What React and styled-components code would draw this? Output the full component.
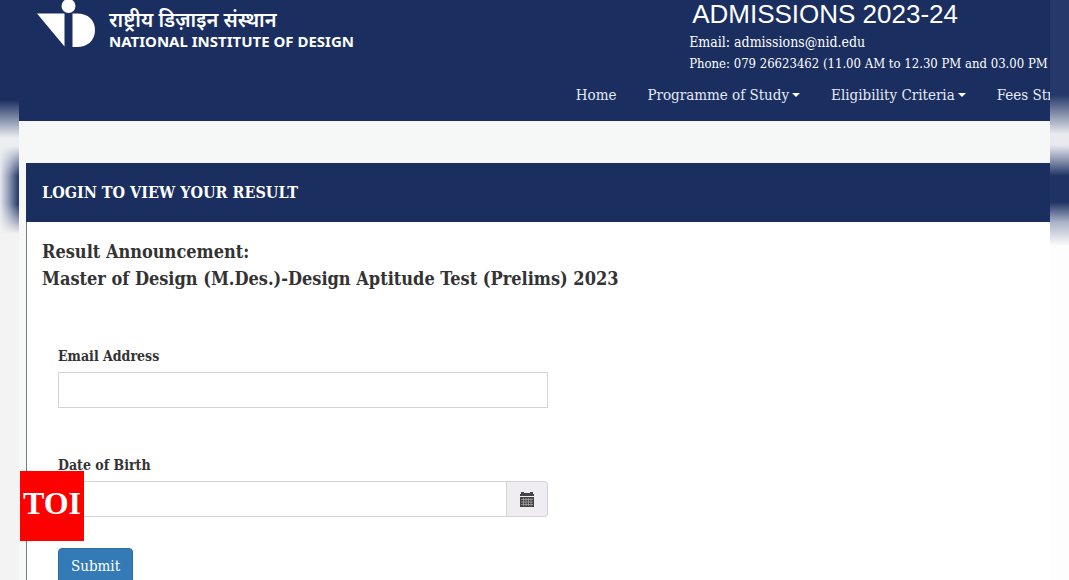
import styled, { createGlobalStyle } from "styled-components";

const GlobalStyle = createGlobalStyle`
    * {
        box-sizing: border-box;
    }
    body {
        margin: 0;
        overflow: hidden;
        background: #fff;
        color: #333;
        font-family: "Roboto Slab", "DejaVu Serif Condensed", "DejaVu Serif", serif;
    }
`;
const Frame = styled.div`
    display: grid;
    grid-template-columns: 19px minmax(0, 1fr) 19px;
    height: 100vh;
    overflow: hidden;
`;
const LeftEdge = styled.div`
    background:
        linear-gradient(to bottom, #1b2e60 100px, rgba(27,46,96,0) 138px),
        linear-gradient(to bottom, #eceef1 146px, rgba(236,238,241,0) 176px, rgba(243,243,243,0) 204px, #f3f3f3 234px),
        linear-gradient(to right, #e6e8ee, #8d98b4 9px, #2b3d6e 18px);
`;
const RightEdge = styled.div`
    background: linear-gradient(
        to bottom,
        #24386a 95px,
        #8f98b0 116px,
        #e9eaee 134px,
        #e9eaee 145px,
        #8c96b1 160px,
        #1f3264 176px,
        #1f3264 202px,
        #a9b1c5 222px,
        #fdfdfd 246px
    );
`;
const Page = styled.main`
    display: flex;
    flex-direction: column;
    min-width: 0;
    background: #f6f8f8;
    overflow: hidden;
`;
const Header = styled.header`
    height: 121px;
    flex-shrink: 0;
    background: #1b2e60;
    color: #fff;
`;
const HeaderTop = styled.div`
    display: grid;
    grid-template-columns: 65% minmax(0, 1fr);
    height: 74px;
`;
const Brand = styled.a`
    display: flex;
    align-items: flex-start;
    gap: 14px;
    padding-left: 18px;
    color: #fff;
    text-decoration: none;
`;
const BrandText = styled.span`
    display: flex;
    flex-direction: column;
    padding-top: 7px;
    font-family: "Noto Sans", "Noto Sans Devanagari", "Open Sans", sans-serif;
    font-weight: 600;
    white-space: nowrap;
`;
const HindiName = styled.span`
    font-size: 20px;
    line-height: 25px;
`;
const EnglishName = styled.span`
    font-size: 15px;
    line-height: 18px;
    font-weight: bold;
`;
const Contact = styled.div`
    white-space: nowrap;
`;
const Title = styled.h1`
    margin: 0 0 3px 3px;
    font-family: "Liberation Sans", Arial, sans-serif;
    font-size: 26px;
    line-height: 29px;
    font-weight: normal;
`;
const ContactLine = styled.p`
    margin: 0;
    font-size: ${props => props.$small ? 13 : 14}px;
    line-height: 21px;
`;
const Nav = styled.nav`
    display: flex;
    gap: 31px;
    padding-left: 54%;
    padding-top: 10px;
    overflow: hidden;
`;
const NavLink = styled.a`
    display: flex;
    align-items: center;
    flex-shrink: 0;
    gap: 3px;
    color: #e4eaf5;
    font-size: 15px;
    line-height: 22px;
    text-decoration: none;
    white-space: nowrap;
`;
const Caret = styled.span`
    border: 4px solid transparent;
    border-top-color: #fff;
    border-bottom: 0;
`;
const Panel = styled.section`
    flex: 1;
    margin: 42px 0 0 7px;
    border-left: 1px solid #777;
    background: #fff;
`;
const PanelTitle = styled.h2`
    margin: 0 0 0 -1px;
    padding: 0 16px;
    background: #1b2e60;
    color: #fff;
    font-size: 16px;
    line-height: 59px;
    font-weight: bold;
`;
const Announcement = styled.h3`
    margin: 0;
    padding: 16px 15px 0;
    font-size: 18px;
    line-height: 27px;
    font-weight: bold;
`;
const Form = styled.form`
    display: flex;
    flex-direction: column;
    align-items: flex-start;
    padding: 53px 31px 0;
`;
const Field = styled.div`
    display: flex;
    flex-direction: column;
    width: 50%;
    min-width: 490px;
    margin-bottom: ${props => props.$gap}px;
`;
const Label = styled.label`
    margin-bottom: 5px;
    font-size: 14px;
    line-height: 22px;
    font-weight: bold;
`;
const Input = styled.input`
    flex: 1;
    min-width: 0;
    min-height: 36px;
    padding: 6px 12px;
    border: 1px solid #d5d3d8;
    background: #fff;
    font: inherit;
    outline: none;
`;
const InputGroup = styled.div`
    display: flex;
`;
const DateButton = styled.button`
    display: flex;
    align-items: center;
    justify-content: center;
    width: 41px;
    padding: 0;
    border: 1px solid #d5d3d8;
    border-left: 0;
    border-radius: 0 4px 4px 0;
    background: #efedf1;
    color: #444;
`;
const Submit = styled.button`
    height: 36px;
    padding: 0 12px;
    border: 1px solid #2e6da4;
    border-radius: 4px;
    background: #337ab7;
    color: #fff;
    font: inherit;
    font-size: 15px;
`;
const Badge = styled.div`
    position: fixed;
    left: 20px;
    bottom: 39px;
    width: 64px;
    height: 70px;
    background: #f00;
    color: #fff;
    font-family: "Liberation Serif", "Times New Roman", serif;
    font-size: 32px;
    line-height: 64px;
    font-weight: bold;
    text-align: center;
`;

function Logo() {
    return (
        <svg width="58" height="48" viewBox="0 0 58 48" fill="#fff" aria-hidden="true">
            <circle cx="31.5" cy="6" r="7" />
            <path d="M0 13.5H27.5V46.5Z" />
            <path d="M35.5 13.5H40C51 13.5 58 20 58 30C58 41 50 47 40 47H35.5Z" />
        </svg>
    );
}

function CalendarIcon() {
    return (
        <svg width="14" height="15" viewBox="0 0 14 15" aria-hidden="true">
            <path fill="currentColor" d="M0 2H1V0H4V1H10V0H13V2H14V4H0ZM0 5H14V15H0Z" />
            <path stroke="#bbb" strokeWidth=".6" d="M1 7.5H13M1 10H13M1 12.5H13M3.5 6V14M6 6V14M8.5 6V14M11 6V14" />
        </svg>
    );
}

const links = [
    {label: "Home"},
    {label: "Programme of Study", menu: true},
    {label: "Eligibility Criteria", menu: true},
    {label: "Fees Structure"},
];

export default function App() {
    return (
        <>
            <GlobalStyle />
            <Frame>
                <LeftEdge />
                <Page>
                    <Header>
                        <HeaderTop>
                            <Brand href="#">
                                <Logo />
                                <BrandText>
                                    <HindiName lang="hi">राष्ट्रीय डिज़ाइन संस्थान</HindiName>
                                    <EnglishName>NATIONAL INSTITUTE OF DESIGN</EnglishName>
                                </BrandText>
                            </Brand>
                            <Contact>
                                <Title>ADMISSIONS 2023-24</Title>
                                <ContactLine>Email: admissions@nid.edu</ContactLine>
                                <ContactLine $small>Phone: 079 26623462 (11.00 AM to 12.30 PM and 03.00 PM</ContactLine>
                            </Contact>
                        </HeaderTop>
                        <Nav>
                            {links.map(link => (
                                <NavLink href="#" key={link.label}>
                                    {link.label}
                                    {link.menu && <Caret />}
                                </NavLink>
                            ))}
                        </Nav>
                    </Header>
                    <Panel>
                        <PanelTitle>LOGIN TO VIEW YOUR RESULT</PanelTitle>
                        <Announcement>
                            Result Announcement:<br />
                            Master of Design (M.Des.)-Design Aptitude Test (Prelims) 2023
                        </Announcement>
                        <Form onSubmit={ev => ev.preventDefault()}>
                            <Field $gap={46}>
                                <Label htmlFor="email">Email Address</Label>
                                <Input id="email" type="email" />
                            </Field>
                            <Field $gap={31}>
                                <Label htmlFor="dob">Date of Birth</Label>
                                <InputGroup>
                                    <Input id="dob" type="text" />
                                    <DateButton type="button" aria-label="Pick a date">
                                        <CalendarIcon />
                                    </DateButton>
                                </InputGroup>
                            </Field>
                            <Submit type="submit">Submit</Submit>
                        </Form>
                    </Panel>
                </Page>
                <RightEdge />
            </Frame>
            <Badge>TOI</Badge>
        </>
    );
}
